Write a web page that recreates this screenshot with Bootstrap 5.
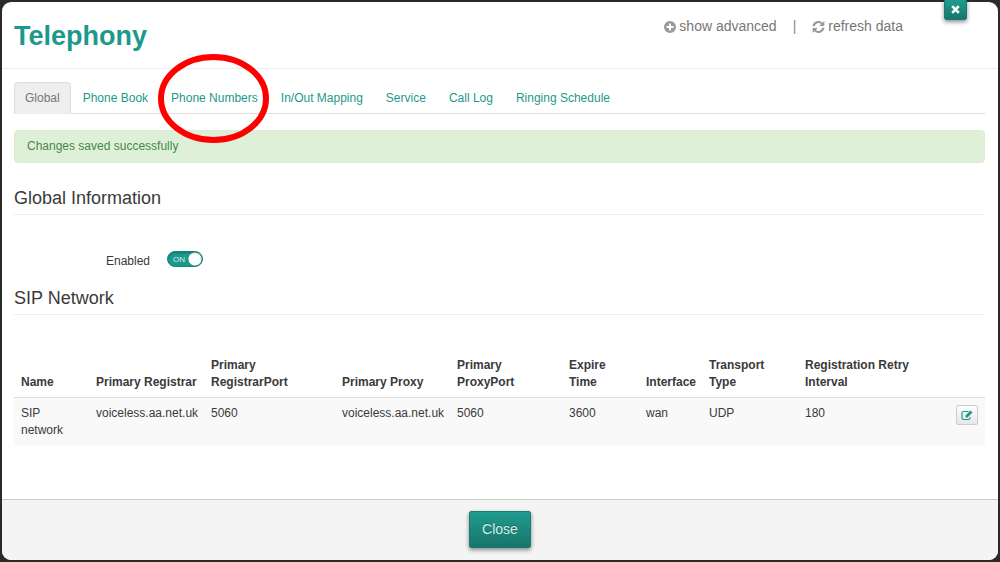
<!DOCTYPE html>
<html lang="en">
<head>
<meta charset="utf-8">
<meta name="viewport" content="width=device-width, initial-scale=1">
<title>Telephony</title>
<link href="https://cdn.jsdelivr.net/npm/bootstrap@5.3.0/dist/css/bootstrap.min.css" rel="stylesheet">
<style>
:root { --teal: #1c998c; --teal-dark: #18756b; }
body { background: #2a2a2a; color: #3a3a3a; font: 12px/17px "Liberation Sans", Arial, sans-serif; padding: 2px; }
a { text-decoration: none; }
.app-panel { min-height: calc(100vh - 4px); background: #fff; border-radius: 9px; }
.app-head { height: 67px; padding: 0 95px 0 12px; border-bottom: 1px solid #eee; }
.app-title { font-size: 27px; line-height: 32px; font-weight: 700; color: var(--teal); padding-top: 18px; }
.head-links { font-size: 14px; line-height: 18px; padding-top: 15px; gap: 16px; color: #888; }
.head-links a { color: #777; gap: 3px; }
.head-links svg { fill: #999; margin-top: 1px; }
.btn-teal { color: #d5ebe8; background: linear-gradient(#1f9c8f, var(--teal-dark)); border: 1px solid #187c71; border-radius: 2px; box-shadow: 0 2px 4px rgba(0,0,0,.45); }
.btn-teal:hover { color: #fff; background: var(--teal-dark); }
.btn-corner { top: -3px; right: 31px; width: 23px; height: 21px; }
.btn-close-panel { font-size: 14px; line-height: 19px; padding: 8px 12px; text-shadow: 0 -1px 0 rgba(0,0,0,.25); }
.app-body { padding: 13px 13px 24px 12px; }
.app-tabs { --bs-nav-tabs-border-color: #ddd; gap: 1px; margin-bottom: 16px; }
.app-tabs .nav-link { padding: 7px 10px 6px; color: var(--teal); border-radius: 4px 4px 0 0; }
.app-tabs .nav-link.active { color: #777; background: #eee; border-color: #ddd #ddd #eee; }
.ring-mark { pointer-events: none; z-index: 2; }
.saved-note { background: #dff0d8; border: 1px solid #dcecd0; color: #468847; border-radius: 4px; padding: 7px 12px; margin-bottom: 23px; }
.section-title { font-size: 18px; line-height: 24px; font-weight: 400; border-bottom: 1px solid #eee; padding-bottom: 4px; margin: 0; }
.enable-row { padding: 36px 0 16px; gap: 17px; }
.enable-row label { width: 136px; text-align: right; padding-top: 2px; }
.toggle-box { height: 16px; }
.toggle-box input { appearance: none; display: block; width: 36px; height: 16px; margin: 0; border-radius: 8px; border: 1px solid #17877b; background: radial-gradient(circle at 27px 7px, #fff 6px, transparent 7px), var(--teal); box-shadow: inset 0 1px 2px rgba(0,0,0,.25); }
.toggle-box span { left: 6px; top: 0; font-size: 8px; line-height: 17px; color: #d8efec; pointer-events: none; }
.sip-table { margin: 35px 0 0; color: inherit; table-layout: fixed; width: 100%; --bs-table-color: #3a3a3a; }
.sip-table th, .sip-table td { padding: 7px; border: 0; }
.sip-table th { vertical-align: bottom; padding-bottom: 6px; border-bottom: 1px solid #ddd; }
.sip-table td { background: #f9f9f9; white-space: nowrap; }
.sip-table td.wrap-cell { white-space: normal; }
.c-name { width: 75px; } .c-host { width: 115px; } .c-rport { width: 131px; } .c-pport { width: 112px; }
.c-exp { width: 77px; } .c-if { width: 63px; } .c-type { width: 96px; } .c-edit { width: 40px; }
.btn-edit { width: 22px; height: 20px; border: 1px solid #ccc; border-radius: 2px; background: linear-gradient(#fff, #e6e6e6); }
.app-foot { background: #f4f4f4; border-top: 1px solid #ccc; border-radius: 0 0 9px 9px; padding: 11px 12px 12px; }
</style>
</head>
<body>
<main class="app-panel position-relative d-flex flex-column">
  <header class="app-head d-flex justify-content-between align-items-start">
    <h1 class="app-title m-0">Telephony</h1>
    <div class="head-links d-flex">
      <a href="#" class="d-flex"><svg width="12" height="18" viewBox="0 0 12 18" aria-hidden="true"><path fill-rule="evenodd" d="M6 3a6 6 0 1 0 0 12a6 6 0 0 0 0-12zM5 5.500h2v2.500h2.500v2h-2.500v2.500h-2v-2.500h-2.500v-2h2.500z"/></svg>show advanced</a>
      <span>|</span>
      <a href="#" class="d-flex"><svg width="13" height="18" viewBox="0 0 13 18" aria-hidden="true"><path d="M.5 8.200A6 6 0 0 1 10.600 4.700L12.300 3v5H7.300L9.200 6.100A4 4 0 0 0 2.700 8.200zM12.500 9.800A6 6 0 0 1 2.400 13.300L.7 15v-5h5L3.800 11.900A4 4 0 0 0 10.300 9.800z"/></svg>refresh data</a>
    </div>
    <button type="button" class="btn btn-teal btn-corner position-absolute p-0 d-flex align-items-center justify-content-center" aria-label="Close">
      <svg width="9" height="9" viewBox="0 0 9 9" aria-hidden="true"><path d="M1.200 1.200l6.600 6.600M7.800 1.200l-6.600 6.600" stroke="#fff" stroke-width="2.600"/></svg>
    </button>
  </header>
  <div class="app-body">
    <ul class="nav nav-tabs app-tabs">
      <li class="nav-item"><a class="nav-link active" aria-current="page" href="#">Global</a></li>
      <li class="nav-item"><a class="nav-link" href="#">Phone Book</a></li>
      <li class="nav-item position-relative"><a class="nav-link" href="#">Phone Numbers</a>
        <svg class="ring-mark position-absolute top-50 start-50 translate-middle" width="112" height="90" viewBox="0 0 112 90" aria-hidden="true"><ellipse cx="55.500" cy="45.500" rx="52.500" ry="41.500" fill="none" stroke="#f00" stroke-width="6"/></svg></li>
      <li class="nav-item"><a class="nav-link" href="#">In/Out Mapping</a></li>
      <li class="nav-item"><a class="nav-link" href="#">Service</a></li>
      <li class="nav-item"><a class="nav-link" href="#">Call Log</a></li>
      <li class="nav-item"><a class="nav-link" href="#">Ringing Schedule</a></li>
    </ul>
    <div class="saved-note" role="status">Changes saved successfully</div>
    <h2 class="section-title">Global Information</h2>
    <div class="enable-row d-flex align-items-start">
      <label for="enabled">Enabled</label>
      <div class="toggle-box position-relative"><input type="checkbox" role="switch" id="enabled" checked><span class="position-absolute">ON</span></div>
    </div>
    <h2 class="section-title">SIP Network</h2>
    <table class="table sip-table">
      <colgroup><col class="c-name"><col class="c-host"><col class="c-rport"><col class="c-host"><col class="c-pport"><col class="c-exp"><col class="c-if"><col class="c-type"><col><col class="c-edit"></colgroup>
      <thead><tr><th>Name</th><th>Primary Registrar</th><th>Primary RegistrarPort</th><th>Primary Proxy</th><th>Primary ProxyPort</th><th>Expire Time</th><th>Interface</th><th>Transport Type</th><th>Registration Retry Interval</th><th></th></tr></thead>
      <tbody><tr><td class="wrap-cell">SIP network</td><td>voiceless.aa.net.uk</td><td>5060</td><td>voiceless.aa.net.uk</td><td>5060</td><td>3600</td><td>wan</td><td>UDP</td><td>180</td>
        <td><button type="button" class="btn btn-edit ms-auto p-0 d-flex align-items-center justify-content-center" aria-label="Edit"><svg width="12" height="11" viewBox="0 0 12 11" fill="none" aria-hidden="true"><path d="M7.500 1.500H2.500Q1 1.500 1 3v5q0 1.500 1.500 1.500h5Q9 9.500 9 8V7" stroke="#1c998c" stroke-width="1.200"/><path d="M4.500 7.500V5.500L9.500.5l2 2L6.500 7.500z" fill="#1c998c"/></svg></button></td></tr></tbody>
    </table>
  </div>
  <footer class="app-foot text-center mt-auto">
    <button type="button" class="btn btn-teal btn-close-panel">Close</button>
  </footer>
</main>
<script src="https://cdn.jsdelivr.net/npm/bootstrap@5.3.0/dist/js/bootstrap.bundle.min.js"></script>
</body>
</html>
